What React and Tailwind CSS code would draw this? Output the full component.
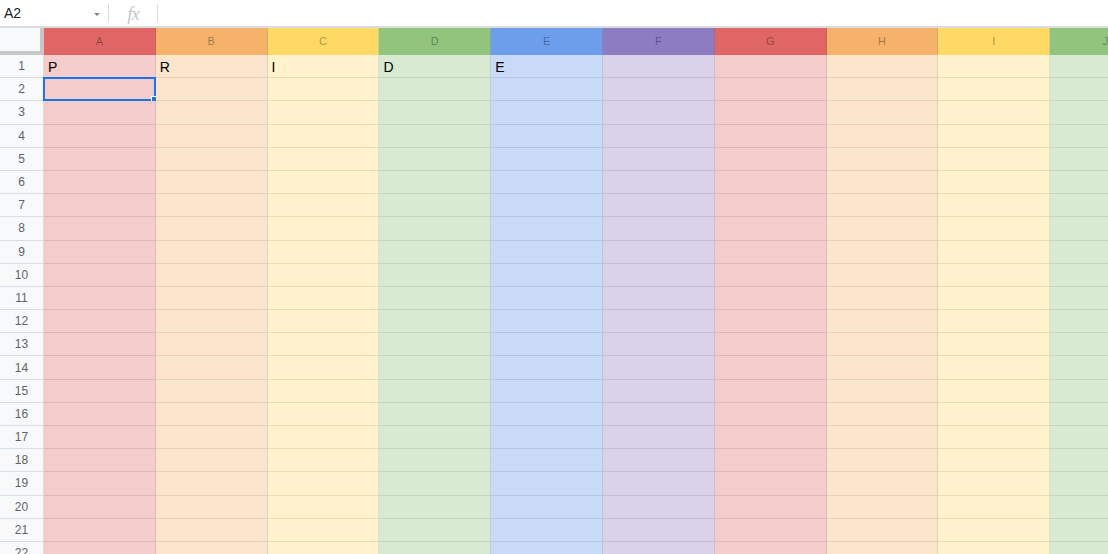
import React from "react";

const cols = [
  { l: "A", h: "bg-[#e06666]", c: "bg-[#f4cccc]" },
  { l: "B", h: "bg-[#f6b26b]", c: "bg-[#fce5cd]" },
  { l: "C", h: "bg-[#ffd966]", c: "bg-[#fff2cc]" },
  { l: "D", h: "bg-[#93c47d]", c: "bg-[#d9ead3]" },
  { l: "E", h: "bg-[#6d9eeb]", c: "bg-[#c9daf8]" },
  { l: "F", h: "bg-[#8e7cc3]", c: "bg-[#d9d2e9]" },
  { l: "G", h: "bg-[#e06666]", c: "bg-[#f4cccc]" },
  { l: "H", h: "bg-[#f6b26b]", c: "bg-[#fce5cd]" },
  { l: "I", h: "bg-[#ffd966]", c: "bg-[#fff2cc]" },
  { l: "J", h: "bg-[#93c47d]", c: "bg-[#d9ead3]" },
];

const row1 = ["P", "R", "I", "D", "E"];
const rows = Array.from({ length: 22 }, (_, i) => i + 1);

export default function App() {
  return (
    <div className="w-[1108px] h-[554px] overflow-hidden bg-white font-['Liberation_Sans',Arial,sans-serif]">
      {/* formula bar */}
      <div className="h-[26px] flex items-center border-b-2 border-[#dadce0] box-content">
        <div className="w-[108px] h-full flex items-center pl-[4px] pr-[8px] justify-between">
          <span className="text-[14px] text-[#202124]">A2</span>
          <span className="w-0 h-0 border-l-[3px] border-r-[3px] border-t-[3px] border-l-transparent border-r-transparent border-t-[#80868b] mt-[2px]" />
        </div>
        <div className="w-px h-[18px] bg-[#dadce0]" />
        <div className="w-[48px] flex items-center justify-center">
          <span className="text-[19px] italic text-[#c4c7cc] font-['Liberation_Serif',serif] leading-none tracking-[-1px]">fx</span>
        </div>
        <div className="w-px h-[18px] bg-[#dadce0]" />
      </div>
      {/* column header */}
      <div className="flex h-[27px]">
        <div className="w-[44px] shrink-0 bg-[#f8f9fa] border-r-[4px] border-b-[4px] border-[#c4c7c5] box-border" />
        {cols.map((c) => (
          <div
            key={c.l}
            className={`w-[111.8px] shrink-0 ${c.h} border-r border-[rgba(0,0,0,0.08)] flex items-center justify-center text-[11px] text-[rgba(0,0,0,0.35)]`}
          >
            {c.l}
          </div>
        ))}
      </div>
      {/* rows */}
      {rows.map((r) => (
        <div key={r} className="flex h-[23.2px]">
          <div className="w-[44px] shrink-0 bg-[#f8f9fa] border-r border-b border-[#dadce0] box-border flex items-center justify-center text-[12px] text-[#5f6368]">
            {r}
          </div>
          {cols.map((c, i) => (
            <div
              key={c.l}
              className={`relative w-[111.8px] shrink-0 ${c.c} border-r border-b border-[rgba(0,0,0,0.09)] box-border flex items-end pl-[4px] pb-[1px] text-[14px] text-black leading-[18px]`}
            >
              {r === 1 && row1[i] ? row1[i] : ""}
              {r === 2 && i === 0 && (
                <div className="absolute -left-px -top-px -right-[1px] -bottom-[1px] border-2 border-[#1a73e8] pointer-events-none">
                  <div className="absolute -right-[4px] -bottom-[4px] w-[7px] h-[7px] bg-[#1a73e8] border border-white" />
                </div>
              )}
            </div>
          ))}
        </div>
      ))}
    </div>
  );
}
